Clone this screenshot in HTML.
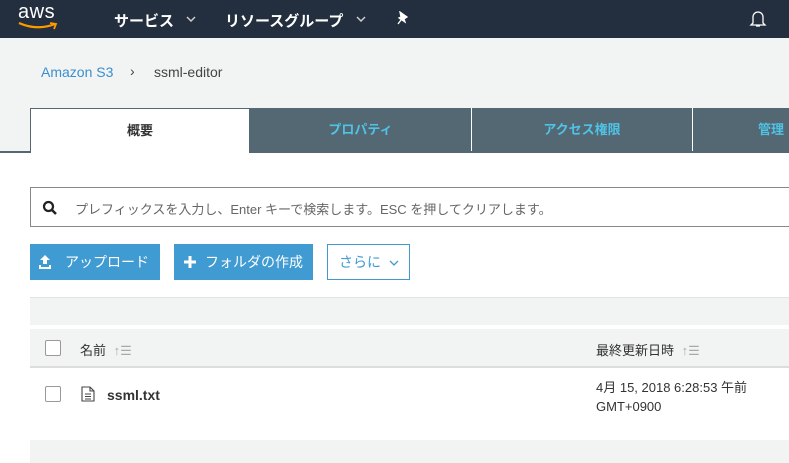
<!DOCTYPE html>
<html><head><meta charset="utf-8"><style>
*{margin:0;padding:0;box-sizing:border-box}
body{width:789px;height:463px;overflow:hidden;background:#fff;font-family:"Liberation Sans","Noto Sans CJK JP",sans-serif;position:relative;color:#333}
.abs{position:absolute}
.nav{left:0;top:0;width:789px;height:38px;background:#232f3e;color:#fff}
.gray{left:0;top:38px;width:789px;height:114px;background:#f2f3f3}
.tab{top:108px;height:43px;background:#546873;color:#4fc3e6;font-weight:bold;font-size:13px;text-align:center;line-height:43px;border-right:1px solid #fff}
.btn{top:244px;height:36px;background:#3f9bd2;color:#fff;font-size:14px;line-height:36px;font-weight:bold}
.cb{width:16px;height:16px;border:1px solid #999;border-radius:2px;background:#fff}
</style></head><body>
<div class="abs nav">
 <div class="abs" style="left:18px;top:1px;font-size:20px;letter-spacing:0.5px">aws</div>
 <svg class="abs" style="left:17px;top:21px" width="42" height="10"><path d="M2 2 Q20 10 38 3" stroke="#f90" stroke-width="2.2" fill="none"/><path d="M33 2 L39 3 L37 8" stroke="#f90" stroke-width="1.8" fill="none"/></svg>
 <div class="abs" style="left:114px;top:10px;font-size:15px;font-weight:bold">サービス</div>
 <svg class="abs" style="left:186px;top:16px" width="10" height="6"><path d="M1 1 L5 5 L9 1" stroke="#ccc" stroke-width="1.5" fill="none"/></svg>
 <div class="abs" style="left:225px;top:10px;font-size:15px;font-weight:bold">リソースグループ</div>
 <svg class="abs" style="left:356px;top:16px" width="10" height="6"><path d="M1 1 L5 5 L9 1" stroke="#ccc" stroke-width="1.5" fill="none"/></svg>
 <svg class="abs" style="left:396px;top:11px" width="14" height="16"><path d="M4 1 L11 6 L8 8 L9 11 L3 7 L5 6 Z M5 9 L2 13" stroke="#fff" stroke-width="1.3" fill="#fff"/></svg>
 <svg class="abs" style="left:749px;top:9px" width="18" height="19"><path d="M4 14 V8 a5 5 0 0 1 10 0 V14 L16 16 H2 Z M7 17 h4" stroke="#fff" stroke-width="1.3" fill="none"/></svg>
</div>
<div class="abs gray"></div>
<div class="abs" style="left:41px;top:64px;font-size:14px;color:#3a8fcf">Amazon S3</div>
<div class="abs" style="left:130px;top:63px;font-size:14px;color:#444">›</div>
<div class="abs" style="left:154px;top:64px;font-size:14px;color:#444">ssml-editor</div>
<div class="abs" style="left:0;top:151px;width:789px;height:2px;background:#546873"></div>
<div class="abs" style="left:30px;top:108px;width:220px;height:45px;background:#fff;border:1px solid #546873;border-bottom:none;text-align:center;line-height:43px;font-size:13px;font-weight:bold;color:#333">概要</div>
<div class="abs tab" style="left:250px;width:222px">プロパティ</div>
<div class="abs tab" style="left:472px;width:221px">アクセス権限</div>
<div class="abs tab" style="left:693px;width:140px;border:none;text-align:left;padding-left:65px">管理</div>
<div class="abs" style="left:30px;top:187px;width:780px;height:40px;border:1px solid #888;background:#fff"></div>
<svg class="abs" style="left:42px;top:200px" width="16" height="16"><circle cx="6.5" cy="6.5" r="4.5" stroke="#222" stroke-width="2.2" fill="none"/><path d="M10 10 L14 14" stroke="#222" stroke-width="2.5"/></svg>
<div class="abs" style="left:75px;top:199px;font-size:13px;color:#666">プレフィックスを入力し、Enter キーで検索します。ESC を押してクリアします。</div>
<div class="abs btn" style="left:30px;width:130px"><svg class="abs" style="left:8px;top:10px" width="14" height="16"><path d="M7 1 L2 6 H5 V10 H9 V6 H12 Z M1 11 V15 H13 V11 H11 V13 H3 V11Z" fill="#fff"/></svg><span style="position:absolute;left:35px;font-weight:normal">アップロード</span></div>
<div class="abs btn" style="left:174px;width:139px"><svg class="abs" style="left:9px;top:11px" width="14" height="14"><path d="M7 1 V13 M1 7 H13" stroke="#fff" stroke-width="3"/></svg><span style="position:absolute;left:31px;font-weight:normal">フォルダの作成</span></div>
<div class="abs" style="left:327px;top:244px;width:83px;height:36px;border:1px solid #3f9bd2;color:#3f9bd2;font-size:14px;line-height:34px;padding-left:11px">さらに</div>
<svg class="abs" style="left:389px;top:260px" width="10" height="6"><path d="M1 1 L5 5 L9 1" stroke="#3f9bd2" stroke-width="1.3" fill="none"/></svg>
<div class="abs" style="left:30px;top:297px;width:760px;height:28px;background:#f2f3f3;border-top:1px solid #e2e4e4"></div>
<div class="abs" style="left:30px;top:329px;width:760px;height:39px;background:#f2f3f3;border-bottom:2px solid #ddd"></div>
<div class="abs cb" style="left:45px;top:340px"></div>
<div class="abs" style="left:80px;top:340px;font-size:13px">名前 <span style="color:#aaa;margin-left:4px">↑☰</span></div>
<div class="abs" style="left:596px;top:340px;font-size:13px">最終更新日時 <span style="color:#aaa;margin-left:4px">↑☰</span></div>
<div class="abs cb" style="left:45px;top:386px"></div>
<svg class="abs" style="left:81px;top:386px" width="14" height="16"><path d="M1 1 H9 L13 5 V15 H1 Z M9 1 V5 H13 M4 8 H10 M4 10.5 H10 M4 13 H10" stroke="#444" stroke-width="1.1" fill="none"/></svg>
<div class="abs" style="left:107px;top:387px;font-size:14px;font-weight:bold">ssml.txt</div>
<div class="abs" style="left:596px;top:378px;font-size:13px;line-height:19px">4月 15, 2018 6:28:53 午前<br>GMT+0900</div>
<div class="abs" style="left:30px;top:440px;width:760px;height:23px;background:#f2f3f3"></div>
</body></html>
